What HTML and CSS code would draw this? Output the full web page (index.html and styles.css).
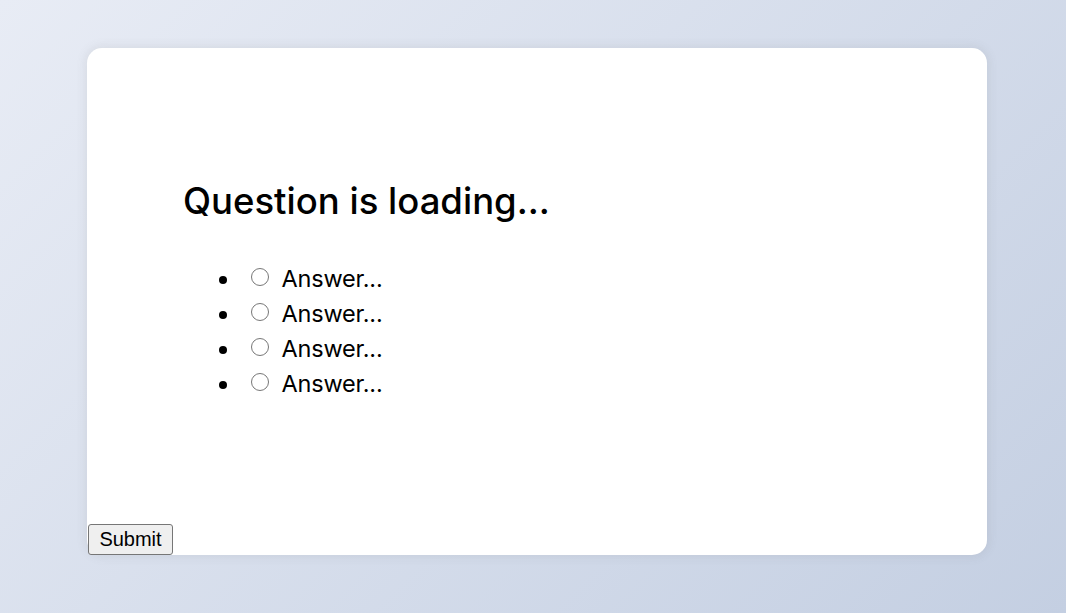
FILE: index.html
```html
<!DOCTYPE html>
<html lang="en">
<head>
    <meta charset="UTF-8">
    <meta name="viewport" content="width=device-width, initial-scale=1.0">
    <title>Quiz</title>
    <link rel="stylesheet" href="styles.css">
</head>
<body>

<div class="quiz-container" id="quiz">
    <div class="quiz-header">
        <h2 id="question">Question is loading...</h2>

        <ul>
            <li><input type="radio" name="answer" id="a" class="answer"> <label for="a" id="a_text">Answer...</label></li>
            <li><input type="radio" name="answer" id="b" class="answer"> <label for="b" id="b_text">Answer...</label></li>
            <li><input type="radio" name="answer" id="c" class="answer"> <label for="c" id="c_text">Answer...</label></li>
            <li><input type="radio" name="answer" id="d" class="answer"> <label for="d" id="d_text">Answer...</label></li>
        </ul>
    </div>
    <button id="submit">Submit</button>
</div>

</body>
</html>
```

FILE: styles.css
```css
* {
    box-sizing: border-box;
}

body {
    margin: 0;
    height: 100vh;
    background: linear-gradient(135deg, #e8ecf5 0%, #c4cfe2 100%);
    font-family: Inter, "Open Sans", sans-serif;
    padding: 48px 0 0 87px;
}

.quiz-container {
    background-color: #fff;
    border-radius: 15px;
    box-shadow: 0 0 10px 2px rgba(100, 100, 100, 0.1);
    width: 900px;
    height: 507px;
    display: flex;
    flex-direction: column;
}

.quiz-header {
    flex: 1;
    padding: 97px 64px 0 64px;
}

h2 {
    padding: 32px 32px 0 32px;
    margin: 0 0 36px 0;
    font-size: 36.5px;
    font-weight: 500;
    line-height: 48px;
    color: #000;
}

ul {
    margin: 0;
    padding-left: 90px;
    font-size: 23.5px;
}

li {
    line-height: 35px;
    padding-left: 5px;
}

li input {
    appearance: none;
    width: 18px;
    height: 18px;
    margin: 0 6px 0 5px;
    border: 1.3px solid #777;
    border-radius: 50%;
    background: #fff;
    vertical-align: 1px;
}

li label {
    letter-spacing: -0.2px;
}

button {
    align-self: flex-start;
    width: 85px;
    margin-left: 1px;
    font-family: "Liberation Sans", Arial, sans-serif;
    font-size: 20px;
    line-height: 23px;
    padding: 3px 0;
    border: 1px solid #767676;
    border-radius: 3px;
    background-color: #efefef;
    color: #000;
}
```
